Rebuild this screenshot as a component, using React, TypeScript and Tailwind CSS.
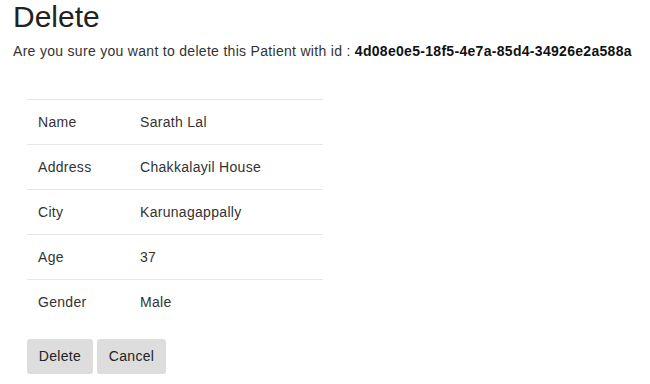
import React from "react";

const patient = [
  { label: "Name", value: "Sarath Lal" },
  { label: "Address", value: "Chakkalayil House" },
  { label: "City", value: "Karunagappally" },
  { label: "Age", value: "37" },
  { label: "Gender", value: "Male" },
];

export default function App() {
  return (
    <div className="min-h-screen bg-white px-[13px] text-[#333] tracking-[0.3px] font-['Liberation_Sans',Arial,sans-serif]">
      <h1 className="text-[30px] leading-[34px] font-normal text-[#222] tracking-normal">Delete</h1>
      <p className="mt-[7px] text-[14px] leading-[20px]">
        Are you sure you want to delete this Patient with id :{" "}
        <b className="text-[#111]">4d08e0e5-18f5-4e7a-85d4-34926e2a588a</b>
      </p>

      <table className="ml-[14px] mt-[38px] w-[296px] text-[14px] leading-[20px] border-collapse">
        <tbody>
          {patient.map((row) => (
            <tr key={row.label} className="border-t border-[#e6e6e6]">
              <td className="w-[113px] px-[11px] py-[12px]">{row.label}</td>
              <td className="px-0 py-[12px]">{row.value}</td>
            </tr>
          ))}
        </tbody>
      </table>

      <div className="ml-[14px] mt-[15px] flex gap-[4px]">
        <button className="h-[35px] w-[66px] rounded-[3px] bg-[#dddddd] text-[14px] text-[#222]">
          Delete
        </button>
        <button className="h-[35px] w-[69px] rounded-[3px] bg-[#dddddd] text-[14px] text-[#222]">
          Cancel
        </button>
      </div>
    </div>
  );
}
